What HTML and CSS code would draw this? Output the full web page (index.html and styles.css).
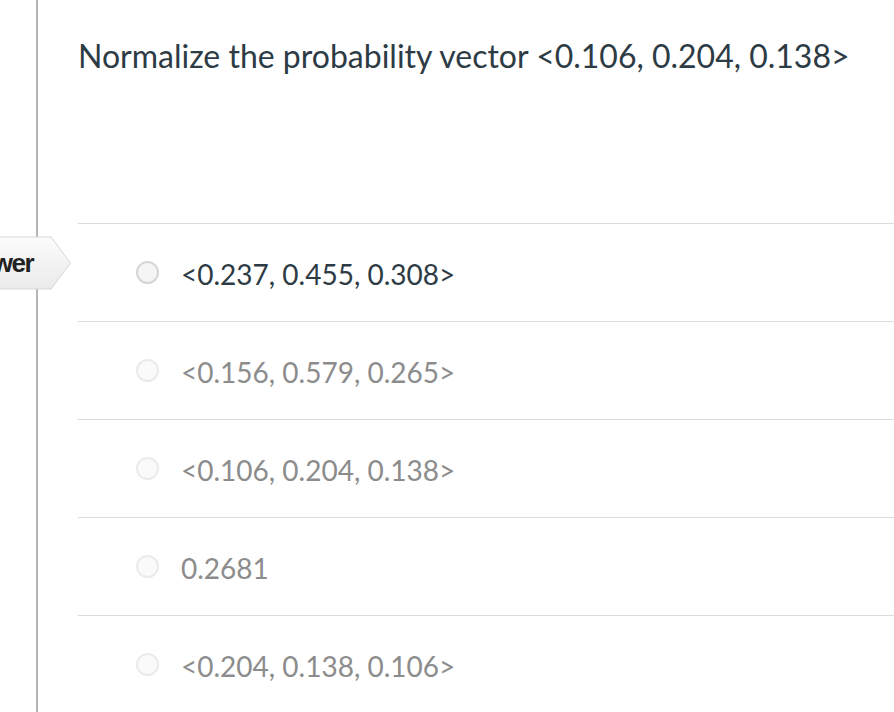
FILE: index.html
```html
<!DOCTYPE html>
<html>
<head>
<meta charset="utf-8">
<link rel="stylesheet" href="styles.css">
</head>
<body>
<div class="page">
  <div class="rail"></div>
  <div class="tag">
    <svg class="tag-shape" width="72" height="54" viewBox="0 0 72 54">
      <defs>
        <linearGradient id="g" x1="0" y1="0" x2="0" y2="1">
          <stop offset="0" stop-color="#fbfbfb"/>
          <stop offset="1" stop-color="#ebebeb"/>
        </linearGradient>
      </defs>
      <polygon points="-2,1 51,1 70.5,27 51,53 -2,53" fill="url(#g)" stroke="#d6d6d6" stroke-width="1"/>
    </svg>
    <span class="tag-text">Answer</span>
  </div>
  <div class="content">
    <div class="question">Normalize the probability vector &lt;0.106, 0.204, 0.138&gt;</div>
    <div class="answers">
      <div class="option selected"><span class="radio"></span><span class="label">&lt;0.237, 0.455, 0.308&gt;</span></div>
      <div class="option"><span class="radio"></span><span class="label">&lt;0.156, 0.579, 0.265&gt;</span></div>
      <div class="option"><span class="radio"></span><span class="label">&lt;0.106, 0.204, 0.138&gt;</span></div>
      <div class="option"><span class="radio"></span><span class="label">0.2681</span></div>
      <div class="option"><span class="radio"></span><span class="label">&lt;0.204, 0.138, 0.106&gt;</span></div>
    </div>
  </div>
</div>
</body>
</html>
```

FILE: styles.css
```css
html, body {
  margin: 0;
  padding: 0;
  background: #fff;
}
body {
  font-family: Lato, "Liberation Sans", sans-serif;
  width: 894px;
  height: 712px;
  overflow: hidden;
}
.page {
  position: relative;
  display: flex;
  height: 712px;
}
.rail {
  width: 36px;
  flex: 0 0 36px;
  border-right: 2px solid #b5b5b5;
}
.tag {
  position: absolute;
  left: 0;
  top: 236px;
  width: 72px;
  height: 54px;
  overflow: hidden;
}
.tag-shape {
  position: absolute;
  left: 0;
  top: 0;
}
.tag-text {
  position: absolute;
  right: 39px;
  top: 12px;
  font-family: "Liberation Sans", Arial, sans-serif;
  font-weight: bold;
  font-size: 26px;
  letter-spacing: -1.5px;
  color: #222;
  white-space: nowrap;
}
.content {
  flex: 1;
  padding-left: 40px;
}
.question {
  height: 186px;
  padding-top: 37px;
  font-size: 32px;
  line-height: 1.2;
  color: #2d3b45;
  white-space: nowrap;
}
.answers {
  display: flex;
  flex-direction: column;
}
.option {
  display: flex;
  align-items: center;
  height: 97px;
  border-top: 1px solid #dcdcdc;
  padding-left: 58px;
  font-size: 28px;
  color: #8c8c8c;
}
.option.selected {
  color: #2d3b45;
}
.radio {
  box-sizing: border-box;
  width: 23px;
  height: 23px;
  border-radius: 50%;
  border: 2px solid #ebebeb;
  background: #fafafa;
  margin-right: 22px;
  flex: 0 0 auto;
}
.option.selected .radio {
  border-color: #d6d6d6;
  background: #f5f5f5;
}
.label {
  white-space: nowrap;
  padding-top: 2px;
}
```
